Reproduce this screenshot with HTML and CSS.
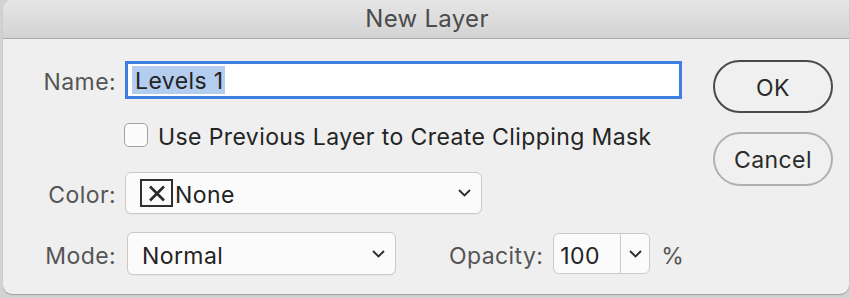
FILE: index.html
```html
<!DOCTYPE html>
<html lang="en">
<head>
    <meta charset="UTF-8">
    <title>New Layer</title>
    <link rel="stylesheet" href="styles.css">
</head>
<body>
<div class="window">
    <div class="titlebar">New Layer</div>
    <div class="content">
        <div class="form">
            <div class="row name-row">
                <label class="label">Name:</label>
                <div class="text-field"><span class="selected">Levels 1</span></div>
            </div>
            <div class="row check-row">
                <span class="label"></span>
                <span class="checkbox"></span>
                <span class="check-text">Use Previous Layer to Create Clipping Mask</span>
            </div>
            <div class="row color-row">
                <label class="label">Color:</label>
                <div class="select color-select">
                    <span class="none-box">
                        <svg width="18" height="17" viewBox="0 0 18 17"><path d="M2 1.5 L16 15.5 M16 1.5 L2 15.5" stroke="#2a2a2a" stroke-width="2.6" fill="none"/></svg>
                    </span>
                    <span class="value">None</span>
                    <svg class="chevron" width="13" height="8" viewBox="0 0 13 8"><path d="M1 1 L6.5 6.5 L12 1" stroke="#2b2b2b" stroke-width="1.8" fill="none"/></svg>
                </div>
            </div>
            <div class="row mode-row">
                <label class="label">Mode:</label>
                <div class="select mode-select">
                    <span class="value">Normal</span>
                    <svg class="chevron" width="13" height="8" viewBox="0 0 13 8"><path d="M1 1 L6.5 6.5 L12 1" stroke="#2b2b2b" stroke-width="1.8" fill="none"/></svg>
                </div>
                <label class="label opacity-label">Opacity:</label>
                <div class="combo">
                    <span class="combo-value">100</span>
                    <span class="combo-arrow">
                        <svg width="13" height="8" viewBox="0 0 13 8"><path d="M1 1 L6.5 6.5 L12 1" stroke="#2b2b2b" stroke-width="1.8" fill="none"/></svg>
                    </span>
                </div>
                <span class="unit">%</span>
            </div>
        </div>
        <div class="buttons">
            <div class="button default">OK</div>
            <div class="button">Cancel</div>
        </div>
    </div>
</div>
</body>
</html>
```

FILE: styles.css
```css
* {
    margin: 0;
    padding: 0;
    box-sizing: border-box;
}

body {
    width: 850px;
    height: 298px;
    overflow: hidden;
    background: #d2d2d2;
    font-family: Inter, "Liberation Sans", sans-serif;
    font-size: 23px;
    letter-spacing: 0.4px;
    color: #232323;
}

.window {
    margin-left: 3px;
    width: 846px;
    height: 294px;
    background: #efefef;
    border-radius: 9px 0 9px 9px;
    overflow: hidden;
    box-shadow: 0 1px 1px rgba(0, 0, 0, 0.25);
}

.titlebar {
    height: 39px;
    background: linear-gradient(#e6e6e6, #d3d3d3);
    border-bottom: 1px solid #ababab;
    text-align: center;
    line-height: 38px;
    font-size: 24px;
    letter-spacing: 0.3px;
    color: #4b4b4b;
    padding-left: 2px;
}

.content {
    display: flex;
    padding-top: 22px;
}

.form {
    display: flex;
    flex-direction: column;
    width: 710px;
}

.row {
    display: flex;
    align-items: center;
}

.label {
    width: 113px;
    text-align: right;
    color: #555;
    margin-right: 9px;
    padding-top: 4px;
    flex: none;
}

.name-row {
    height: 38px;
}

.text-field {
    width: 557px;
    height: 38px;
    background: #fff;
    border: 3px solid #3e7fe2;
    padding: 3px 4px;
    display: flex;
    align-items: center;
}

.selected {
    background: #b4cdef;
    height: 28px;
    line-height: 30px;
    padding: 0 1px 0 3px;
}

.check-row {
    margin-top: 24px;
    height: 24px;
}

.checkbox {
    width: 24px;
    height: 24px;
    border: 1.5px solid #a2a2a2;
    border-radius: 5px;
    background: #fbfbfb;
    margin-left: -1px;
    margin-right: 10px;
}

.check-text {
    color: #242424;
    padding-top: 4px;
}

.color-row {
    margin-top: 25px;
}

.select {
    display: flex;
    align-items: center;
    background: #fbfbfb;
    border: 1.5px solid #c9c9c9;
    border-radius: 6px;
    box-shadow: 0 1px 0 rgba(0, 0, 0, 0.04);
}

.color-select {
    width: 357px;
    height: 42px;
    padding: 0 10px 0 14px;
}

.none-box {
    width: 33px;
    height: 28px;
    border: 2px solid #2f2f2f;
    display: flex;
    align-items: center;
    justify-content: center;
    margin-right: 2px;
}

.value {
    flex: 1;
    color: #232323;
    padding-top: 4px;
}

.chevron {
    flex: none;
}

.mode-row {
    margin-top: 18px;
}

.mode-select {
    width: 269px;
    height: 43px;
    margin-left: 2px;
    padding: 0 10px 0 14px;
}

.opacity-label {
    width: auto;
    margin-left: 53px;
    margin-right: 10px;
}

.combo {
    display: flex;
    width: 97px;
    height: 41px;
    background: #fbfbfb;
    border: 1.5px solid #c9c9c9;
    border-radius: 6px;
}

.combo-value {
    width: 67px;
    line-height: 38px;
    padding-left: 6px;
    padding-top: 3px;
    border-right: 1.5px solid #c9c9c9;
}

.combo-arrow {
    flex: 1;
    display: flex;
    align-items: center;
    justify-content: center;
}

.unit {
    margin-left: 11px;
    padding-top: 4px;
    color: #555;
}

.buttons {
    display: flex;
    flex-direction: column;
    gap: 19px;
    margin-top: -1px;
}

.button {
    width: 120px;
    height: 54px;
    border: 2px solid #b0b0b0;
    border-radius: 27px;
    display: flex;
    align-items: center;
    justify-content: center;
    padding-top: 2px;
    color: #2a2a2a;
    background: #f0f0f0;
}

.button.default {
    height: 53px;
    border-color: #4a4a4a;
}
```
